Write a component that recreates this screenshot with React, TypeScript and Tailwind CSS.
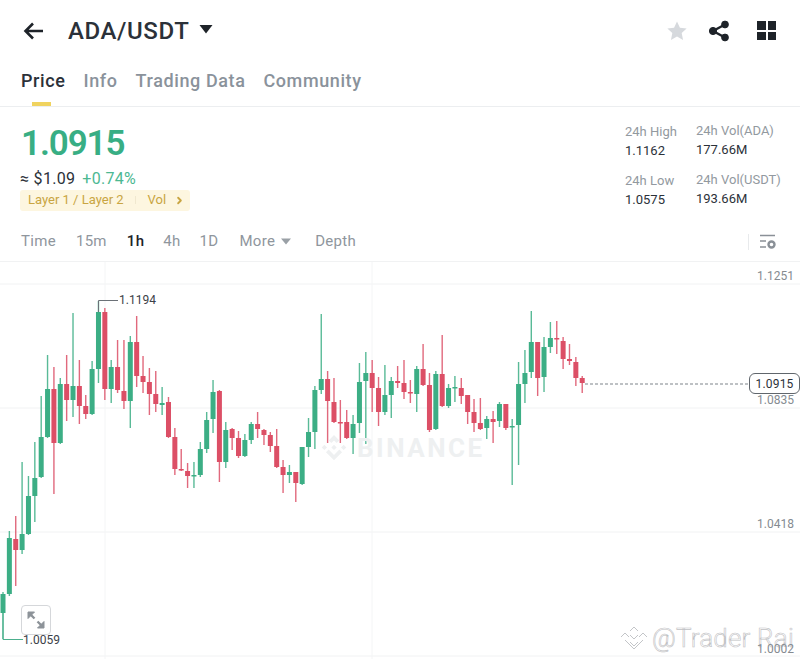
import { ChevronRight } from 'lucide-react';

type Candle = ['g' | 'r', number, number, number, number];

// colour, body top, body bottom, wick top, wick bottom (page y coordinates)
const candles: Candle[] = [
  ['g', 594, 613, 592, 639], ['g', 538, 594, 531, 596], ['r', 539, 550, 516, 586], ['g', 534, 550, 462, 554],
  ['g', 496, 534, 476, 535], ['g', 478, 496, 442, 522], ['g', 437, 477, 396, 478], ['g', 389, 437, 355, 438],
  ['r', 389, 443, 367, 494], ['g', 384, 443, 378, 444], ['r', 384, 400, 355, 421], ['g', 386, 400, 313, 417],
  ['r', 386, 406, 360, 424], ['r', 406, 414, 395, 419], ['g', 369, 414, 361, 415], ['g', 312, 369, 301, 383],
  ['r', 312, 389, 308, 400], ['g', 367, 389, 360, 403], ['r', 367, 390, 340, 393], ['r', 391, 401, 340, 409],
  ['g', 342, 401, 336, 428], ['r', 342, 376, 316, 387], ['r', 376, 382, 356, 393], ['r', 382, 394, 368, 415],
  ['r', 394, 404, 371, 412], ['g', 403, 405, 387, 415], ['r', 402, 437, 397, 438], ['r', 437, 469, 428, 475],
  ['r', 469, 470, 449, 471], ['r', 471, 476, 463, 488], ['g', 475, 476, 462, 488], ['g', 449, 475, 442, 477],
  ['g', 420, 449, 412, 453], ['g', 392, 419, 380, 433], ['r', 391, 462, 390, 482], ['g', 430, 462, 422, 468],
  ['r', 429, 438, 428, 450], ['r', 438, 456, 431, 458], ['g', 440, 456, 434, 457], ['g', 424, 440, 422, 444],
  ['r', 424, 429, 412, 438], ['r', 430, 435, 429, 445], ['r', 435, 446, 432, 452], ['r', 446, 467, 429, 468],
  ['r', 467, 475, 460, 493], ['g', 472, 475, 465, 483], ['r', 472, 483, 472, 502], ['g', 447, 484, 447, 485],
  ['g', 432, 447, 418, 457], ['g', 390, 432, 386, 449], ['g', 379, 390, 314, 394], ['r', 379, 401, 371, 443],
  ['r', 402, 422, 378, 423], ['r', 422, 423, 400, 443], ['r', 422, 438, 410, 439], ['g', 424, 438, 415, 454],
  ['g', 382, 423, 363, 433], ['g', 373, 381, 352, 444], ['r', 373, 388, 360, 412], ['r', 388, 412, 377, 426],
  ['g', 395, 412, 365, 415], ['g', 381, 395, 377, 418], ['r', 381, 383, 366, 388], ['r', 383, 392, 360, 399],
  ['r', 392, 393, 380, 403], ['g', 369, 394, 366, 412], ['r', 369, 385, 344, 386], ['r', 385, 430, 373, 432],
  ['g', 374, 429, 371, 430], ['r', 374, 406, 335, 407], ['g', 388, 406, 384, 408], ['g', 387, 388, 376, 402],
  ['r', 388, 396, 378, 404], ['r', 395, 412, 395, 424], ['r', 412, 423, 399, 432], ['r', 423, 429, 398, 430],
  ['g', 419, 428, 416, 439], ['r', 419, 422, 411, 443], ['g', 404, 421, 402, 427], ['r', 404, 428, 404, 430],
  ['g', 426, 427, 419, 485], ['g', 384, 425, 362, 465], ['g', 373, 384, 350, 403], ['g', 342, 372, 311, 378],
  ['r', 342, 378, 342, 396], ['g', 347, 377, 337, 392], ['g', 338, 347, 322, 353], ['r', 338, 339, 321, 354],
  ['r', 341, 359, 337, 369], ['r', 359, 361, 344, 365], ['r', 362, 378, 357, 386], ['r', 378, 383, 376, 393],
];

const tabs = ['Info', 'Trading Data', 'Community'];
const gridRows = [284, 408, 532, 656];
const gridCols = [105, 372];

const CandleChart = () => (
  <svg viewBox="0 262 800 397" className="h-full w-full">
    {gridRows.map((y) => (
      <line key={y} x1="0" x2="800" y1={y} y2={y} stroke="#f1f2f3" strokeWidth="1" />
    ))}
    {gridCols.map((x) => (
      <line key={x} x1={x} x2={x} y1="262" y2="659" stroke="#f4f5f6" strokeWidth="1" />
    ))}
    {candles.map(([kind, top, bottom, high, low], i) => {
      const x = 3 + i * 6.365;
      const color = kind === 'g' ? '#3cae85' : '#dc4f66';
      return (
        <g key={i} fill={color} stroke="none">
          <rect x={x - 0.7} y={high} width="1.4" height={low - high} opacity="0.85" />
          <rect x={x - 2.5} y={top} width="5" height={Math.max(bottom - top, 1.5)} />
        </g>
      );
    })}
    <path d="M98.5 312V300.5H118" fill="none" stroke="#6b7177" strokeWidth="1" />
    <path d="M3 613V639.5H23" fill="none" stroke="#4caf8d" strokeWidth="1" />
    <line x1="585" x2="750" y1="384" y2="384" stroke="#7d8389" strokeWidth="1" strokeDasharray="3 2" />
  </svg>
);

const AxisLabel = ({ top, label }: { top: string; label: string }) => (
  <span className={`absolute left-[757px] ${top} text-[12px] leading-[14px] text-[#858b91]`}>
    {label}
  </span>
);

const Stat = ({ label, value, offset }: { label: string; value: string; offset?: boolean }) => (
  <div className={`flex flex-col whitespace-nowrap ${offset ? 'mt-[1px]' : ''}`}>
    <span className="text-[13px] leading-[19px] text-[#9299a0]">{label}</span>
    <span className="text-[13px] leading-[19px] text-[#2b3139]">{value}</span>
  </div>
);

const App = () => {
  return (
    <div className="flex h-[659px] w-[800px] flex-col overflow-hidden bg-white font-['Roboto',sans-serif]">
      <div className="flex h-[62px] items-center pl-[23px] pr-[24px]">
        <svg width="21" height="18" viewBox="0 0 21 18" fill="none" stroke="#1e2329" strokeWidth="2.6">
          <path d="M20 9H2.500M10 1.500 2.500 9l7.500 7.500" />
        </svg>
        <span className="ml-[24px] text-[24px] font-medium tracking-[0.6px] text-[#2b3139]">ADA/USDT</span>
        <svg width="14" height="10" viewBox="0 0 14 10" className="mb-[3px] ml-[10px]" fill="#1e2329">
          <path d="M0.500 1h13L7 9.500z" />
        </svg>
        <svg width="22" height="22" viewBox="0 0 24 24" className="ml-auto" fill="#d6d9dd">
          <path d="m12 1.500 3.200 7 7.300.8-5.400 5 1.500 7.600L12 18l-6.600 3.900 1.500-7.600-5.400-5 7.300-.8z" />
        </svg>
        <svg width="22" height="22" viewBox="0 0 22 22" className="ml-[20px]" fill="#1e2329" stroke="#1e2329">
          <circle cx="17" cy="4.500" r="3.400" />
          <circle cx="17" cy="17.500" r="3.400" />
          <circle cx="5" cy="11" r="3.600" />
          <path d="M17 4.500 5 11l12 6.500" fill="none" strokeWidth="2.400" />
        </svg>
        <div className="ml-[27px] grid h-[19px] w-[19px] grid-cols-2 gap-[2px]">
          <span className="bg-[#1e2329]" />
          <span className="bg-[#1e2329]" />
          <span className="bg-[#1e2329]" />
          <span className="bg-[#1e2329]" />
        </div>
      </div>

      <div className="flex h-[45px] gap-[18px] border-b border-[#eceef0] pl-[21px] text-[18px] leading-[38px] tracking-[0.6px]">
        <div className="relative font-medium text-[#2b3139]">
          Price
          <span className="absolute left-[11px] top-[40px] h-[4px] w-[19px] bg-[#f0d35f]" />
        </div>
        {tabs.map((tab) => (
          <span key={tab} className="font-medium text-[#8a929b]">
            {tab}
          </span>
        ))}
      </div>

      <div className="flex h-[115px] justify-between px-[20px] pt-[15px]">
        <div className="flex flex-col">
          <span className="pl-[1px] text-[35px] font-semibold leading-[43px] tracking-[-1.1px] text-[#38ae84]">1.0915</span>
          <div className="mt-[4px] flex h-[21px] items-center text-[16px] tracking-[0.3px]">
            <span className="text-[#2b3139]">≈ $1.09</span>
            <span className="ml-[7px] text-[#4cb892]">+0.74%</span>
          </div>
          <div className="flex h-[21px] w-[170px] items-center rounded-[3px] bg-[#fdf6e0] pl-[8px] text-[13px] text-[#c9a542]">
            <span>Layer 1 / Layer 2</span>
            <span className="ml-[11px] h-[8px] w-px bg-[#f0e8cf]" />
            <span className="ml-[12px]">Vol</span>
            <ChevronRight className="ml-[8px] h-[11px] w-[11px]" strokeWidth={4} />
          </div>
        </div>
        <div className="-mt-[1px] grid grid-cols-[71px_84px] content-start gap-y-[10px]">
          <Stat label="24h High" value="1.1162" offset />
          <Stat label="24h Vol(ADA)" value="177.66M" />
          <Stat label="24h Low" value="1.0575" offset />
          <Stat label="24h Vol(USDT)" value="193.66M" />
        </div>
      </div>

      <div className="flex h-[40px] items-center pl-[21px] pr-[24px] pt-[1px] text-[15px] tracking-[0.3px] text-[#8f969d]">
        <span>Time</span>
        <span className="ml-[20px]">15m</span>
        <span className="ml-[20px] font-medium text-[#1e2329]">1h</span>
        <span className="ml-[19px]">4h</span>
        <span className="ml-[19px]">1D</span>
        <span className="ml-[21px]">More</span>
        <svg width="10" height="7" viewBox="0 0 10 7" className="ml-[6px]" fill="#9aa0a6">
          <path d="M0 0.500h10L5 6.500z" />
        </svg>
        <span className="ml-[24px]">Depth</span>
        <span className="ml-auto h-[16px] w-px bg-[#e8eaec]" />
        <svg width="17" height="16" viewBox="0 0 17 16" className="ml-[10px]" fill="none" stroke="#8a9097" strokeWidth="1.700">
          <path d="M1 1.500h15M1 7h6M1 13h6" />
          <circle cx="12.500" cy="10.500" r="3" strokeWidth="2.400" />
        </svg>
      </div>

      <div className="relative flex-1 border-t border-[#f1f2f3]">
        <CandleChart />

        <div className="absolute left-[319px] top-[167px] flex items-center gap-[8px] text-[#eef0f1]">
          <svg width="30" height="30" viewBox="0 0 28 28" fill="#eef0f1">
            <path d="m14 1 5 5-2.500 2.500L14 6l-2.500 2.500L9 6zM5 10l2.500 2.500L5 15l-2.500-2.500zM23 10l2.500 2.500L23 15l-2.500-2.500zM14 10l2.500 2.500L14 15l-2.500-2.500zM9 14.500l5 5 5-5 2.500 2.500L14 24.500l-7.500-7.500z" />
          </svg>
          <span className="text-[26px] font-bold tracking-[2.5px]">BINANCE</span>
        </div>

        <span className="absolute left-[119px] top-[31px] text-[12px] leading-[14px] text-[#3b4148]">1.1194</span>

        <AxisLabel top="top-[7px]" label="1.1251" />
        <AxisLabel top="top-[131px]" label="1.0835" />
        <AxisLabel top="top-[255px]" label="1.0418" />

        <div className="absolute left-[749px] top-[111px] flex h-[21px] w-[51px] items-center justify-center rounded-[6px] border border-[#60666c] bg-white text-[12px] tracking-[0.2px] text-[#2b3139]">
          1.0915
        </div>

        <div className="absolute left-[21px] top-[343px] flex h-[30px] w-[30px] items-center justify-center rounded-[4px] border border-[#d5d7da] bg-white">
          <svg width="20" height="20" viewBox="0 0 20 20" fill="#8d9399" stroke="#8d9399">
            <path d="M2 2h6.500L2 8.500z" />
            <path d="M18 18h-6.500l6.500-6.500z" />
            <path d="m4 4 4.500 4.500M16 16l-4.500-4.500" fill="none" strokeWidth="2.400" />
          </svg>
        </div>

        <span className="absolute left-[23px] top-[371px] text-[12px] leading-[14px] text-[#3b4148]">1.0059</span>

        <div className="absolute left-[620px] top-[361px] flex items-center gap-[4px] whitespace-nowrap">
          <svg width="28" height="24" viewBox="0 0 28 24" fill="none" stroke="#c3c5c8" strokeWidth="1">
            <path d="m1 11 4-4 4 4M10 5l4-4 4 4M19 11l4-4 4 4M10 9l4 4 4-4M5 14l9 9 9-9M10 16l4 4 4-4" />
          </svg>
          <span className="text-[26px] font-light leading-[30px] tracking-[0.2px] text-transparent [-webkit-text-stroke:0.6px_#bfc1c4]">@Trader Rai</span>
        </div>

        <AxisLabel top="top-[380px]" label="1.0002" />
      </div>
    </div>
  );
};

export default App;
